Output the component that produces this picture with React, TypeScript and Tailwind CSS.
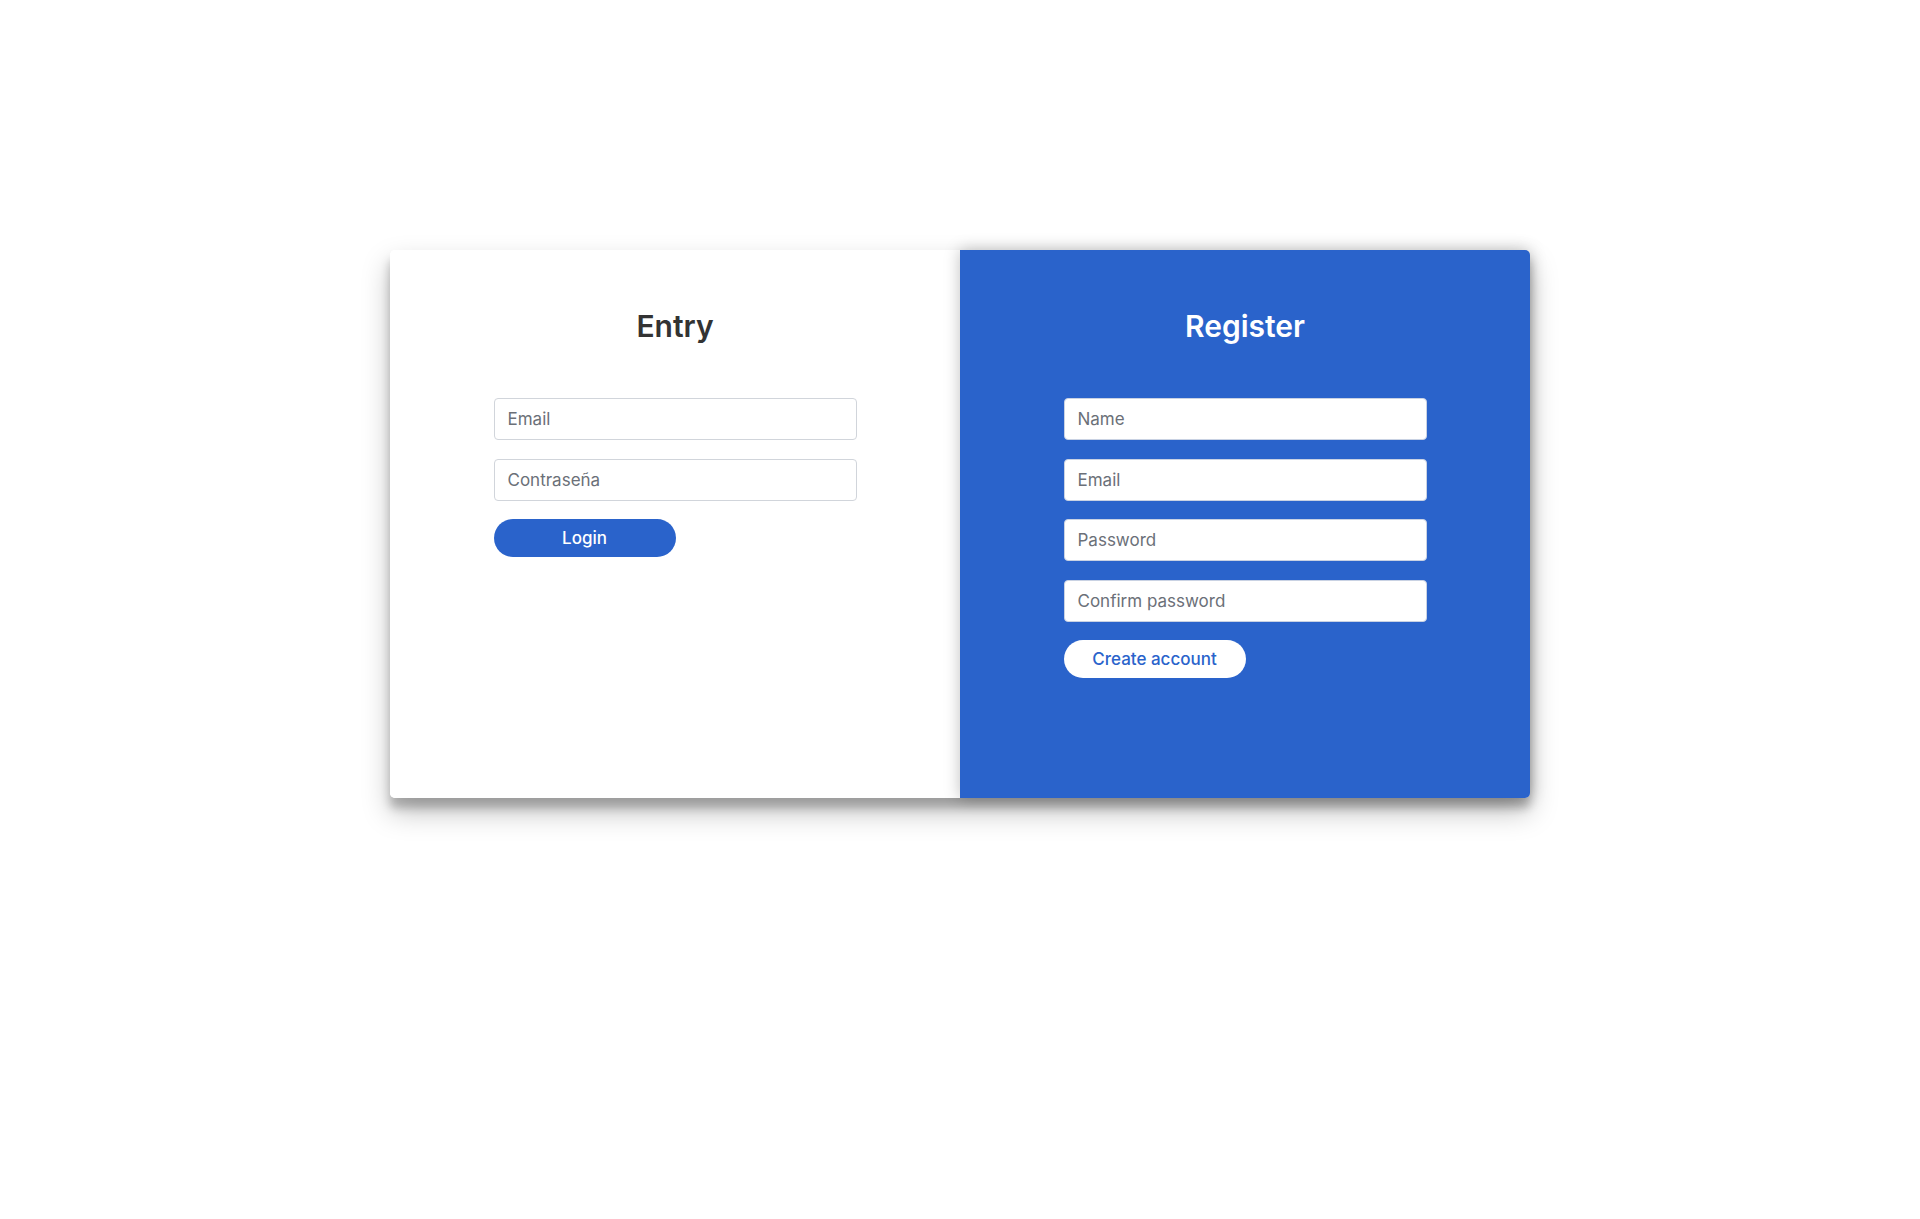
import React from "react";

const shadow =
  "shadow-[0_14px_28px_rgba(0,0,0,0.25),0_10px_10px_rgba(0,0,0,0.22)]";

function Field({ placeholder, type = "text", onBlue = false }: { placeholder: string; type?: string; onBlue?: boolean }) {
  return (
    <input
      type={type}
      placeholder={placeholder}
      className={`w-full h-[42px] rounded-[4px] border px-[13px] text-[17px] text-[#333] placeholder:text-[#6b7078] outline-none bg-white ${
        onBlue ? "border-[#c9d2e3]" : "border-[#d1d5db]"
      }`}
    />
  );
}

export default function App() {
  return (
    <div
      className="min-h-screen bg-white flex justify-center pt-[250px]"
      style={{ fontFamily: "Inter, 'Noto Sans', sans-serif" }}
    >
      <div className={`flex w-[1140px] h-[548px] rounded-[5px] ${shadow}`}>
        {/* login side */}
        <div className="w-[570px] h-full bg-white rounded-l-[5px] flex flex-col items-center pt-[58px]">
          <h1 className="text-[30px] leading-[36px] font-semibold text-[#333]">Entry</h1>
          <form className="w-[363px] mt-[54px] flex flex-col gap-[18.5px]" onSubmit={e => e.preventDefault()}>
            <Field placeholder="Email" type="email" />
            <Field placeholder="Contraseña" type="password" />
            <button
              type="submit"
              className="w-[182px] h-[37.5px] pt-[2px] rounded-full bg-[#2a63cb] text-white text-[17px] font-medium"
            >
              Login
            </button>
          </form>
        </div>

        {/* register side */}
        <div className="relative z-10 w-[570px] h-full bg-[#2a63cb] rounded-r-[5px] flex flex-col items-center pt-[58px] shadow-[0_0_16px_rgba(0,0,0,0.25)]">
          <h1 className="text-[30px] leading-[36px] font-semibold text-white">Register</h1>
          <form className="w-[363px] mt-[54px] flex flex-col gap-[18.5px]" onSubmit={e => e.preventDefault()}>
            <Field placeholder="Name" onBlue />
            <Field placeholder="Email" type="email" onBlue />
            <Field placeholder="Password" type="password" onBlue />
            <Field placeholder="Confirm password" type="password" onBlue />
            <button
              type="submit"
              className="w-[182px] h-[38px] pt-[2px] rounded-full bg-white text-[#2a63cb] text-[17px] font-medium"
            >
              Create account
            </button>
          </form>
        </div>
      </div>
    </div>
  );
}
